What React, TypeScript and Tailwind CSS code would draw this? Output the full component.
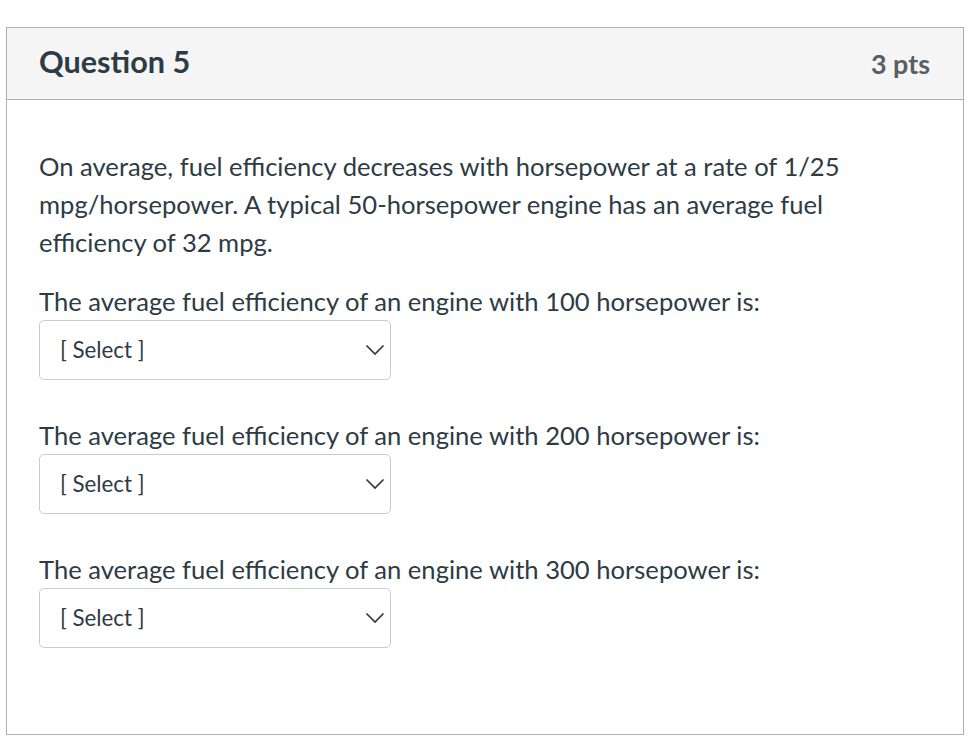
import React from "react";

function SelectBox() {
  return (
    <div className="flex h-[60px] w-[352px] items-center justify-between rounded-[5px] border border-[#c7cdd1] bg-white pl-[20px] pr-[5px]">
      <span className="text-[22.3px] text-[#2d3b45]">[ Select ]</span>
      <svg width="20" height="20" viewBox="0 0 20 20" fill="none">
        <path d="M1.5 5.5l8.5 8.5 8.5-8.5" stroke="#2d3b45" strokeWidth="1.7" />
      </svg>
    </div>
  );
}

export default function App() {
  const prompts = ["100", "200", "300"];
  return (
    <div className="min-h-[753px] bg-white pt-[27px] pl-[6px] font-['Lato',sans-serif] text-[#2d3b45]">
      <div className="w-[958px] border border-[#b0b0b0]">
        <div className="flex h-[72px] items-center justify-between border-b border-[#b0b0b0] bg-[#f5f5f5] pb-[3px] pl-[32px] pr-[33px]">
          <div className="text-[30.6px] font-bold">Question 5</div>
          <div className="mt-[4px] text-[26.9px] font-bold text-[#555f66]">3 pts</div>
        </div>
        <div className="pl-[32px] pt-[47px] pb-[86px] text-[25.6px] leading-[38px]">
          <p className="w-[815px]">
            On average, fuel efficiency decreases with horsepower at a rate of 1/25 mpg/horsepower. A typical 50-horsepower engine has an average fuel efficiency of 32 mpg.
          </p>
          <div className="mt-[21px] flex flex-col gap-[36px]">
            {prompts.map((hp) => (
              <div key={hp}>
                <p>The average fuel efficiency of an engine with {hp} horsepower is:</p>
                <SelectBox />
              </div>
            ))}
          </div>
        </div>
      </div>
    </div>
  );
}
